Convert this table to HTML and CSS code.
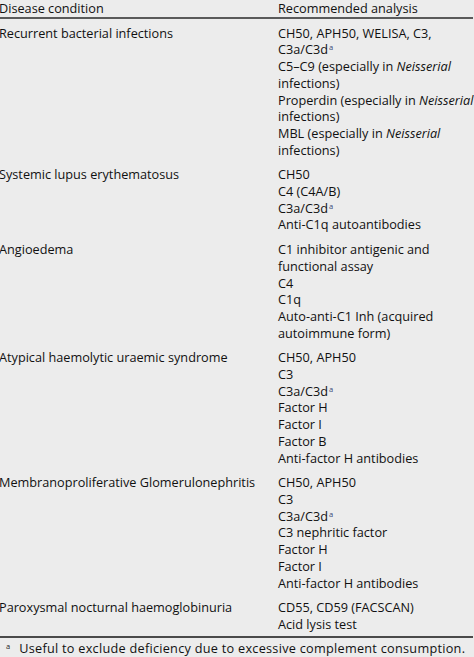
FILE: index.html
```html
<!DOCTYPE html>
<html>
<head>
<meta charset="utf-8">
<link rel="stylesheet" href="styles.css">
</head>
<body>
<div class="table">
  <div class="head">
    <div class="c1">Disease condition</div>
    <div class="c2">Recommended analysis</div>
  </div>
  <div class="body">
    <div class="row">
      <div class="c1">Recurrent bacterial infections</div>
      <div class="c2">
        <div>CH50, APH50, WELISA, C3,</div>
        <div>C3a/C3d<sup>a</sup></div>
        <div>C5–C9 (especially in <i>Neisserial</i></div>
        <div>infections)</div>
        <div>Properdin (especially in <i>Neisserial</i></div>
        <div>infections)</div>
        <div>MBL (especially in <i>Neisserial</i></div>
        <div>infections)</div>
      </div>
    </div>
    <div class="row">
      <div class="c1">Systemic lupus erythematosus</div>
      <div class="c2">
        <div>CH50</div>
        <div>C4 (C4A/B)</div>
        <div>C3a/C3d<sup>a</sup></div>
        <div>Anti-C1q autoantibodies</div>
      </div>
    </div>
    <div class="row">
      <div class="c1">Angioedema</div>
      <div class="c2">
        <div>C1 inhibitor antigenic and</div>
        <div>functional assay</div>
        <div>C4</div>
        <div>C1q</div>
        <div>Auto-anti-C1 Inh (acquired</div>
        <div>autoimmune form)</div>
      </div>
    </div>
    <div class="row">
      <div class="c1">Atypical haemolytic uraemic syndrome</div>
      <div class="c2">
        <div>CH50, APH50</div>
        <div>C3</div>
        <div>C3a/C3d<sup>a</sup></div>
        <div>Factor H</div>
        <div>Factor I</div>
        <div>Factor B</div>
        <div>Anti-factor H antibodies</div>
      </div>
    </div>
    <div class="row">
      <div class="c1">Membranoproliferative Glomerulonephritis</div>
      <div class="c2">
        <div>CH50, APH50</div>
        <div>C3</div>
        <div>C3a/C3d<sup>a</sup></div>
        <div>C3 nephritic factor</div>
        <div>Factor H</div>
        <div>Factor I</div>
        <div>Anti-factor H antibodies</div>
      </div>
    </div>
    <div class="row last">
      <div class="c1">Paroxysmal nocturnal haemoglobinuria</div>
      <div class="c2">
        <div>CD55, CD59 (FACSCAN)</div>
        <div>Acid lysis test</div>
      </div>
    </div>
  </div>
  <div class="foot"><sup>a</sup><span>Useful to exclude deficiency due to excessive complement consumption.</span></div>
</div>
</body>
</html>
```
FILE: styles.css
```css
html, body {
  margin: 0;
  padding: 0;
  background: #ececec;
}
body {
  font-family: "Open Sans", "Noto Sans", sans-serif;
  font-size: 12.7px;
  line-height: 16.7px;
  color: #111111;
  overflow: hidden;
}
.table {
  width: 474px;
  margin-left: -1px;
}
.head {
  display: grid;
  grid-template-columns: 279px 1fr;
  padding-bottom: 0;
  border-bottom: 2px solid #5a5a5a;
}
.body {
  padding-top: 6px;
  padding-bottom: 3px;
  border-bottom: 2px solid #4a4a4a;
}
.row {
  display: grid;
  grid-template-columns: 279px 1fr;
  padding-bottom: 8px;
}
.row.last {
  padding-bottom: 0;
}
.c1, .c2 {
  white-space: nowrap;
  min-width: 0;
}
sup {
  font-size: 7.5px;
  line-height: 0;
  vertical-align: 4px;
  color: #3b4a78;
  margin-left: 1px;
}
.foot {
  display: flex;
  padding-left: 7px;
  padding-top: 2px;
}
.foot sup {
  margin: 0 9px 0 0;
  vertical-align: 0;
  line-height: 12px;
  color: #1e1e1e;
}
.foot span {
  letter-spacing: 0.27px;
  white-space: nowrap;
}
```
